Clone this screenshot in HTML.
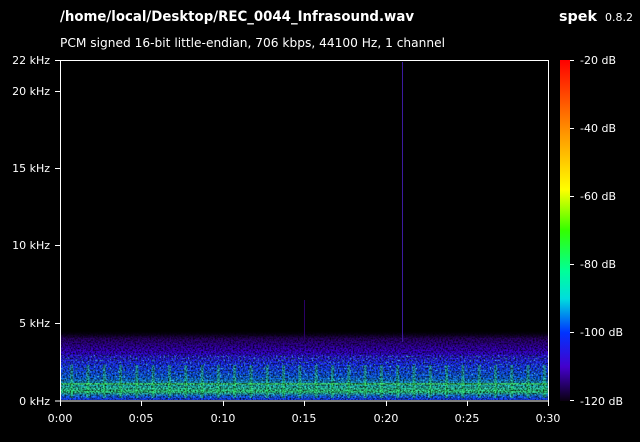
<!DOCTYPE html>
<html><head><meta charset="utf-8"><style>
html,body{margin:0;padding:0;background:#000;width:640px;height:442px;overflow:hidden}
svg{display:block}
text{font-family:"DejaVu Sans","Liberation Sans",sans-serif;fill:#fff}
</style></head><body>
<svg width="640" height="442" viewBox="0 0 640 442" xmlns="http://www.w3.org/2000/svg">
<defs>
<linearGradient id="cb" x1="0" y1="0" x2="0" y2="1">
<stop offset="0" stop-color="#ff0000"/>
<stop offset="0.2" stop-color="#ff8c00"/>
<stop offset="0.38" stop-color="#ffff00"/>
<stop offset="0.5" stop-color="#33ff00"/>
<stop offset="0.62" stop-color="#00ff99"/>
<stop offset="0.7" stop-color="#00dddd"/>
<stop offset="0.8" stop-color="#0033ff"/>
<stop offset="0.9" stop-color="#4400cc"/>
<stop offset="1" stop-color="#0a0010"/>
</linearGradient>
<linearGradient id="sp" x1="0" y1="0" x2="0" y2="1">
<stop offset="0" stop-color="#000" stop-opacity="0"/>
<stop offset="0.12" stop-color="#2a0066"/>
<stop offset="0.3" stop-color="#3a00cc"/>
<stop offset="0.5" stop-color="#1a30ff"/>
<stop offset="0.68" stop-color="#0a60f0"/>
<stop offset="0.8" stop-color="#20c0c0"/>
<stop offset="0.88" stop-color="#30e080"/>
<stop offset="0.95" stop-color="#1060ff"/>
<stop offset="1" stop-color="#2040ff"/>
</linearGradient>
<pattern id="vs" width="16.3" height="60" patternUnits="userSpaceOnUse">
<rect x="5" y="0" width="3" height="60" fill="#30ff60" opacity="0.45"/>
</pattern>
<filter id="nz" x="0" y="0" width="1" height="1"><feTurbulence type="fractalNoise" baseFrequency="0.6" numOctaves="2" seed="3"/><feColorMatrix values="0 0 0 0 0  0 0 0 0 0  0 0 0 0 0  0 0 0 -2.2 1.4"/></filter>
<filter id="nz2" x="0" y="0" width="1" height="1"><feTurbulence type="fractalNoise" baseFrequency="0.5" numOctaves="2" seed="7"/><feColorMatrix values="0 0 0 0 0.1  0 0 0 0 0.9  0 0 0 0 0.8  0 0 0 3 -1.6"/></filter>
</defs>
<text x="60" y="21" font-size="14" font-weight="bold" textLength="354" lengthAdjust="spacingAndGlyphs">/home/local/Desktop/REC_0044_Infrasound.wav</text>
<text x="559" y="21" font-size="14" font-weight="bold" textLength="38" lengthAdjust="spacingAndGlyphs">spek</text>
<text x="605" y="21" font-size="11">0.8.2</text>
<text x="60" y="47" font-size="12" textLength="385" lengthAdjust="spacingAndGlyphs">PCM signed 16-bit little-endian, 706 kbps, 44100 Hz, 1 channel</text>
<!-- spectrogram -->
<rect x="61" y="330" width="487" height="70" fill="url(#sp)"/>
<rect x="61" y="365" width="487" height="33" fill="url(#vs)"/>
<rect x="61" y="383" width="487" height="2" fill="#50ff30" opacity="0.5"/>
<rect x="61" y="355" width="487" height="43" filter="url(#nz2)" opacity="0.8"/>
<rect x="61" y="330" width="487" height="70" filter="url(#nz)" opacity="0.85"/>
<rect x="402" y="62" width="1" height="280" fill="#3a1aa0"/>
<rect x="304" y="300" width="1" height="40" fill="#2a0066"/>
<!-- frame -->
<rect x="60.5" y="60.5" width="488" height="340.5" fill="none" stroke="#fff"/>
<g stroke="#fff">
<line x1="55" y1="60.5" x2="60" y2="60.5"/><line x1="55" y1="91.5" x2="60" y2="91.5"/>
<line x1="55" y1="168.5" x2="60" y2="168.5"/><line x1="55" y1="245.5" x2="60" y2="245.5"/>
<line x1="55" y1="323.5" x2="60" y2="323.5"/><line x1="55" y1="401" x2="60" y2="401"/>
<line x1="60.5" y1="401" x2="60.5" y2="406"/><line x1="141.5" y1="401" x2="141.5" y2="406"/>
<line x1="223.5" y1="401" x2="223.5" y2="406"/><line x1="304.5" y1="401" x2="304.5" y2="406"/>
<line x1="386.5" y1="401" x2="386.5" y2="406"/><line x1="467.5" y1="401" x2="467.5" y2="406"/>
<line x1="548.5" y1="401" x2="548.5" y2="406"/>
<line x1="570" y1="60.5" x2="574" y2="60.5"/><line x1="570" y1="128.5" x2="574" y2="128.5"/>
<line x1="570" y1="196.5" x2="574" y2="196.5"/><line x1="570" y1="264.5" x2="574" y2="264.5"/>
<line x1="570" y1="332.5" x2="574" y2="332.5"/><line x1="570" y1="400.5" x2="574" y2="400.5"/>
</g>
<g font-size="11" text-anchor="end">
<text x="50" y="64">22 kHz</text><text x="50" y="95">20 kHz</text><text x="50" y="172">15 kHz</text>
<text x="50" y="249">10 kHz</text><text x="50" y="327">5 kHz</text><text x="50" y="405">0 kHz</text>
</g>
<g font-size="11" text-anchor="middle">
<text x="60" y="422">0:00</text><text x="141" y="422">0:05</text><text x="223" y="422">0:10</text>
<text x="304" y="422">0:15</text><text x="386" y="422">0:20</text><text x="467" y="422">0:25</text>
<text x="548" y="422">0:30</text>
</g>
<rect x="560" y="60" width="10" height="341" fill="url(#cb)"/>
<g font-size="11">
<text x="580" y="64">-20 dB</text><text x="580" y="132">-40 dB</text><text x="580" y="200">-60 dB</text>
<text x="580" y="268">-80 dB</text><text x="580" y="336">-100 dB</text><text x="580" y="405">-120 dB</text>
</g>
</svg>
</body></html>
